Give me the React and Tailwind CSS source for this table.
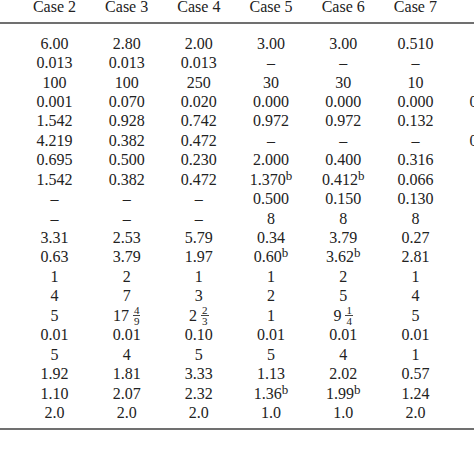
const headers = ["Case 2", "Case 3", "Case 4", "Case 5", "Case 6", "Case 7", ""];

const sup = (v) => ({ v, sup: "b" });
const frac = (w, n, d) => ({ w, n, d });

const rows = [
  ["6.00", "2.80", "2.00", "3.00", "3.00", "0.510"],
  ["0.013", "0.013", "0.013", "–", "–", "–"],
  ["100", "100", "250", "30", "30", "10"],
  ["0.001", "0.070", "0.020", "0.000", "0.000", "0.000", "0.000"],
  ["1.542", "0.928", "0.742", "0.972", "0.972", "0.132"],
  ["4.219", "0.382", "0.472", "–", "–", "–", "0.000"],
  ["0.695", "0.500", "0.230", "2.000", "0.400", "0.316"],
  ["1.542", "0.382", "0.472", sup("1.370"), sup("0.412"), "0.066"],
  ["–", "–", "–", "0.500", "0.150", "0.130"],
  ["–", "–", "–", "8", "8", "8"],
  ["3.31", "2.53", "5.79", "0.34", "3.79", "0.27"],
  ["0.63", "3.79", "1.97", sup("0.60"), sup("3.62"), "2.81"],
  ["1", "2", "1", "1", "2", "1"],
  ["4", "7", "3", "2", "5", "4"],
  ["5", frac("17", "4", "9"), frac("2", "2", "3"), "1", frac("9", "1", "4"), "5"],
  ["0.01", "0.01", "0.10", "0.01", "0.01", "0.01"],
  ["5", "4", "5", "5", "4", "1"],
  ["1.92", "1.81", "3.33", "1.13", "2.02", "0.57"],
  ["1.10", "2.07", "2.32", sup("1.36"), sup("1.99"), "1.24"],
  ["2.0", "2.0", "2.0", "1.0", "1.0", "2.0"],
];

const Cell = ({ c }) => {
  if (c == null) return <span />;
  if (typeof c === "string") return <span>{c}</span>;
  if (c.sup)
    return (
      <span>
        {c.v}
        <span className="relative -top-[5px] text-[13px]">{c.sup}</span>
      </span>
    );
  return (
    <span className="whitespace-nowrap">
      {c.w}{" "}
      <span className="inline-flex flex-col items-center align-[7px] text-[11px] leading-[8px]">
        <span className="pb-[1px]">{c.n}</span>
        <span className="border-t border-[#444] px-[1px] pt-[1px]">{c.d}</span>
      </span>
    </span>
  );
};

export default function App() {
  return (
    <div
      className="w-[474px] h-[474px] overflow-hidden bg-white text-[#222] text-[16px]"
      style={{ fontFamily: '"Liberation Serif", "Times New Roman", serif' }}
    >
      <div className="pl-[18.4px] -mt-[3px]">
        <div className="grid grid-cols-[repeat(7,72.2px)] h-[19.45px] leading-[19.45px] text-center">
          {headers.map((h, i) => (
            <div key={i} className="whitespace-nowrap">{h}</div>
          ))}
        </div>
      </div>
      <div className="mt-[5.7px] h-[2px] bg-[#707070]" />
      <div className="pl-[18.4px] pt-[9.5px]">
        {rows.map((r, i) => (
          <div
            key={i}
            className="grid grid-cols-[repeat(7,72.2px)] h-[19.45px] leading-[19.45px] text-center"
          >
            {Array.from({ length: 7 }).map((_, j) => (
              <div key={j} className="whitespace-nowrap">
                <Cell c={r[j]} />
              </div>
            ))}
          </div>
        ))}
      </div>
      <div className="mt-[6px] h-[2px] bg-[#707070]" />
    </div>
  );
}
